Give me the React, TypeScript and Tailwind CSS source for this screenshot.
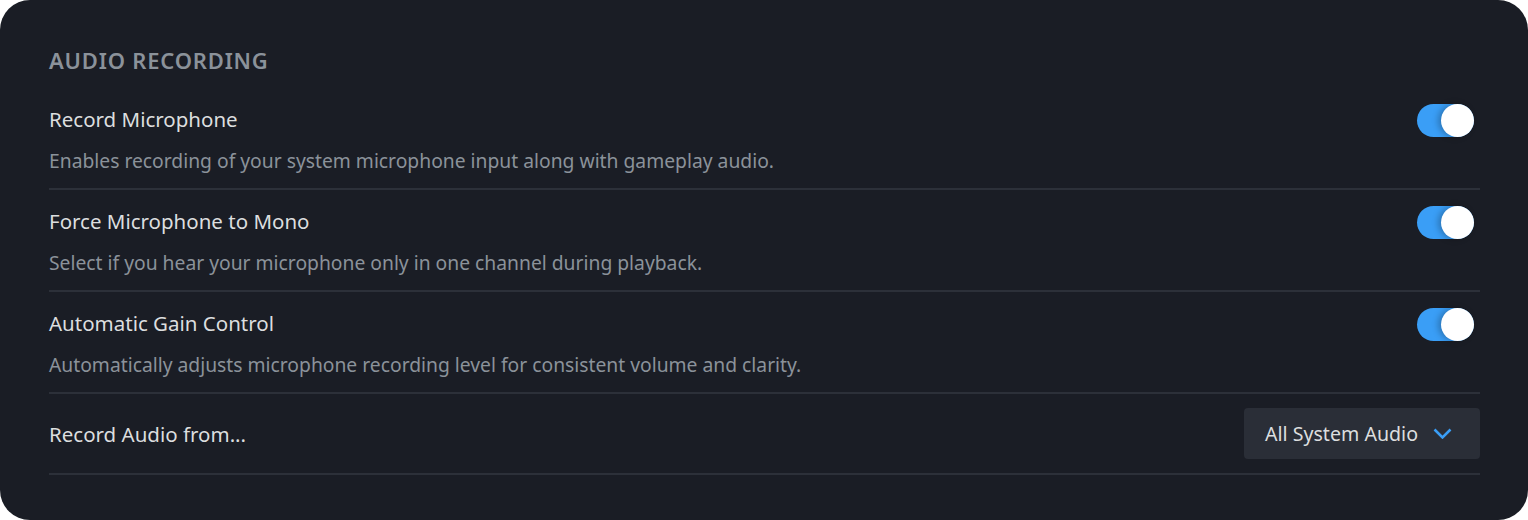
import React, { useState } from "react";

const Toggle = ({ on, onChange }: { on: boolean; onChange: () => void }) => (
  <button
    onClick={onChange}
    className={`relative w-[57px] h-[33px] rounded-full flex-shrink-0 transition-colors ${
      on ? "bg-[#3a9ef6]" : "bg-[#3d4450]"
    }`}
  >
    <span
      className={`absolute top-0 w-[33px] h-[33px] rounded-full bg-white shadow-[-3px_0_6px_rgba(0,0,0,0.25)] transition-all ${
        on ? "left-[24px]" : "left-0"
      }`}
    />
  </button>
);

const App = () => {
  const [settings, setSettings] = useState([
    {
      title: "Record Microphone",
      description:
        "Enables recording of your system microphone input along with gameplay audio.",
      on: true,
    },
    {
      title: "Force Microphone to Mono",
      description:
        "Select if you hear your microphone only in one channel during playback.",
      on: true,
    },
    {
      title: "Automatic Gain Control",
      description:
        "Automatically adjusts microphone recording level for consistent volume and clarity.",
      on: true,
    },
  ]);

  const flip = (i: number) =>
    setSettings((s) => s.map((x, j) => (j === i ? { ...x, on: !x.on } : x)));

  return (
    <div className="bg-white w-full h-[520px]">
      <div
        className="h-full rounded-[30px] bg-[#1a1d25] pl-[49px] pr-[48px] pt-[46px]"
        style={{ fontFamily: '"Noto Sans", "Open Sans", sans-serif' }}
      >
        <h2 className="text-[22px] leading-[28px] font-semibold tracking-[0.8px] text-[#8b929a] mb-[14px]">
          AUDIO RECORDING
        </h2>

        {settings.map((item, i) => (
          <div key={i} className="border-b-2 border-[#2c3039]">
            <div className="flex items-start justify-between pt-[19px] pb-[15px]">
              <div>
                <div className="text-[20.5px] leading-[24px] text-[#dcdedf]">
                  {item.title}
                </div>
                <div className="mt-[18px] text-[19.3px] leading-[24px] text-[#8b929a]">
                  {item.description}
                </div>
              </div>
              <div className="mt-[-3px] mr-[6px]">
                <Toggle on={item.on} onChange={() => flip(i)} />
              </div>
            </div>
          </div>
        ))}

        <div className="border-b-2 border-[#2c3039] flex items-center justify-between py-[14px]">
          <span className="text-[20.5px] leading-[24px] text-[#dcdedf]">
            Record Audio from...
          </span>
          <button className="w-[236px] h-[51px] rounded-[4px] bg-[#2a2e37] flex items-center pl-[21px] pr-[28px] justify-between">
            <span className="text-[19.6px] text-[#dcdedf]">All System Audio</span>
            <svg
              width="19"
              height="11"
              viewBox="0 0 19 11"
              fill="none"
              stroke="#3a9ef6"
              strokeWidth="2.5"
            >
              <path d="M1.5 1.5l8 8 8-8" />
            </svg>
          </button>
        </div>
      </div>
    </div>
  );
};

export default App;
